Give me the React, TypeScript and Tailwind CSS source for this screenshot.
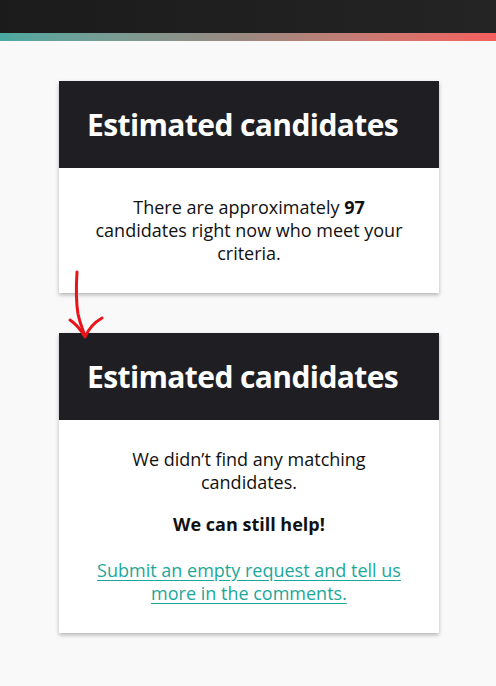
import React from 'react';

const font = { fontFamily: '"Open Sans", "Liberation Sans", sans-serif' };

const Card: React.FC<{ children: React.ReactNode }> = ({ children }) => (
  <div className="w-[380px] bg-white shadow-[0_2px_4px_rgba(0,0,0,0.28)]">
    <div className="h-[87px] bg-[#1f1f23] flex items-center pl-[28px]">
      <h2 className="text-[30px] font-bold text-white tracking-[-0.02em] leading-none">Estimated candidates</h2>
    </div>
    {children}
  </div>
);

export default function App() {
  return (
    <div className="min-h-[686px] bg-[#f9f9f9] relative" style={font}>
      <div className="h-[33px] bg-gradient-to-r from-[#1b1b1b] to-[#242424]" />
      <div className="h-[8px] bg-gradient-to-r from-[#4aa9a1] via-[#9b8880] to-[#f55f5f]" />

      <div className="flex flex-col items-center pt-[40px] pl-[2px] gap-[40px]">
        <Card>
          <div className="px-[30px] pt-[28px] pb-[28px] text-center text-[18px] leading-[23px] text-[#111]">
            There are approximately <strong>97</strong> candidates right now who meet your criteria.
          </div>
        </Card>

        <Card>
          <div className="px-[30px] pt-[28px] pb-[28px] text-center text-[18px] leading-[23px] text-[#111] flex flex-col">
            <p className="px-[40px]">We didn’t find any matching candidates.</p>
            <p className="font-bold mt-[19px]">We can still help!</p>
            <a href="#" className="mt-[23px] text-[#1ba89a] underline underline-offset-[3px]">
              Submit an empty request and tell us more in the comments.
            </a>
          </div>
        </Card>
      </div>

      <svg className="absolute left-[64px] top-[268px]" width="46" height="74" viewBox="0 0 46 74">
        <path d="M13 4 C12 20 12 34 14 46 C16 56 19 62 21 68" fill="none" stroke="#e8141a" strokeWidth="3" strokeLinecap="round" />
        <path d="M6 52 C12 56 17 62 21 69 C25 60 31 54 38 50" fill="none" stroke="#e8141a" strokeWidth="3" strokeLinecap="round" strokeLinejoin="round" />
      </svg>
    </div>
  );
}
